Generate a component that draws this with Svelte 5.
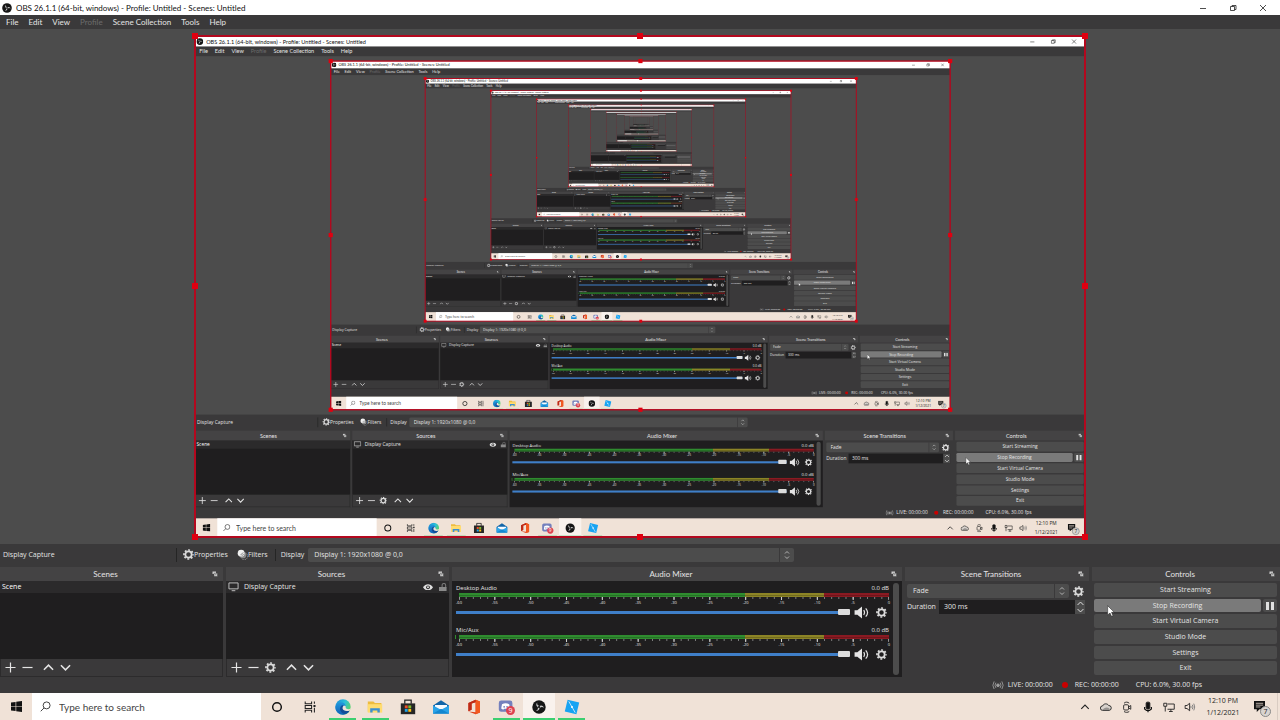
<script lang="ts">
  const maxDepth = 12;

  const menus = ['File', 'Edit', 'View', 'Profile', 'Scene Collection', 'Tools', 'Help'];
  const channels = ['Desktop Audio', 'Mic/Aux'];
  const marks = Array.from({ length: 13 }, (_, i) => (i === 12 ? '0' : String(-60 + i * 5)));
  const minorTicks = Array.from({ length: 61 }, (_, i) => `M${i * 10} 0v2`).join('');
  const majorTicks = Array.from({ length: 13 }, (_, i) => `M${i * 50} 0v3`).join('');
  const handles = ['nw', 'n', 'ne', 'w', 'e', 'sw', 's', 'se'];
  const apps = [
    { name: 'Cortana', running: false },
    { name: 'Task View', running: false },
    { name: 'Edge', running: true },
    { name: 'Explorer', running: true },
    { name: 'Store', running: false },
    { name: 'Mail', running: false },
    { name: 'Office', running: false },
    { name: 'Discord', running: true },
    { name: 'OBS', running: true },
    { name: 'Roblox Studio', running: true }
  ];
  const tray = ['Hidden icons', 'OneDrive', 'Meet Now', 'Microphone', 'Network', 'Volume'];

  let recording = $state(true);
</script>

{#snippet gear()}
  <svg class="gear" viewBox="0 0 16 16" fill="none" stroke="currentColor">
    <circle cx="8" cy="8" r="4.6" stroke-width="2.6" />
    <circle cx="8" cy="8" r="6.6" stroke-width="2.4" stroke-dasharray="2.7 2.484" stroke-dashoffset="1.35" />
  </svg>
{/snippet}

{#snippet popout()}
  <button class="popout" aria-label="Undock">
    <svg viewBox="0 0 12 12">
      <path d="M1 1h7v5H1z" fill="#d0d0d0" />
      <path d="M4 4.5h7V11H4z" fill="#d0d0d0" stroke="#434243" />
      <path d="M6 7.5h3" stroke="#434243" />
    </svg>
  </button>
{/snippet}

{#snippet chevron(dir: string)}
  <svg class="tool" viewBox="0 0 12 12" fill="none" stroke="currentColor" stroke-width="1.7">
    {#if dir === 'up'}
      <path d="M1 8.5l5-5 5 5" />
    {:else}
      <path d="M1 3.5l5 5 5-5" />
    {/if}
  </svg>
{/snippet}

{#snippet updown()}
  <svg class="updown" viewBox="0 0 6 10" fill="none" stroke="#b4b4b4">
    <path d="M1 3.5l2-2 2 2M1 6.5l2 2 2-2" />
  </svg>
{/snippet}

{#snippet obsLogo()}
  <svg viewBox="0 0 20 20">
    <circle cx="10" cy="10" r="9.6" fill="#161616" />
    <g fill="#c8c8c8">
      <path d="M9.3 10.2C6.2 9.4 5.2 6.2 7.4 3.4 7 6 8 7.4 10.4 8.3z" />
      <path d="M9.3 10.2C6.2 9.4 5.2 6.2 7.4 3.4 7 6 8 7.4 10.4 8.3z" transform="rotate(120 10 10)" />
      <path d="M9.3 10.2C6.2 9.4 5.2 6.2 7.4 3.4 7 6 8 7.4 10.4 8.3z" transform="rotate(240 10 10)" />
    </g>
    <circle cx="10" cy="10" r="1.5" fill="#161616" />
  </svg>
{/snippet}

{#snippet appIcon(name: string)}
  {#if name === 'OBS'}
    {@render obsLogo()}
  {:else}
    <svg viewBox="0 0 20 20">
      {#if name === 'Cortana'}
        <circle cx="10" cy="10" r="5.4" fill="none" stroke="#111" stroke-width="1.8" />
      {:else if name === 'Task View'}
        <path d="M4 3v3h8V3M4 17v-3h8v3M4 8v4h8V8zM15.500 3v3M15.500 11v6" fill="none" stroke="#222" stroke-width="1.300" />
        <path d="M14.300 7.500h2.600v2.400h-2.600z" fill="#222" />
      {:else if name === 'Edge'}
        <circle cx="10" cy="10" r="9.600" fill="url(#edge-top)" />
        <path d="M.6 11.500C.2 6.500 4 4 7.600 4c3.200 0 5.600 1.800 5.600 4.600 0 1.700-1.700 2-1.700 3.600 0 2 2.600 3.300 6.800 2.300C16.500 18 13.500 19.700 10 19.600 5 19.400 1 16 .6 11.500z" fill="url(#edge-blue)" />
        <path d="M8 8.400c-3.400 3-1.600 9 4.200 10.400 3-.6 4.900-2 6.100-4.300-4.200 1.300-8.600.4-8.600-3.100 0-1.400.9-1.900 1-3-.6-.8-1.800-.7-2.700 0z" fill="#124d98" />
        <path d="M10.700 8.400c-1.600 1.600-1.900 4.400.5 5.800 2.300 1.200 4.900 1.100 7.300.2l1.700-2.600c-2.600 1.500-6.500 1-6.900-1.200.4-1 .2-2.600-2.600-2.200z" fill="#f0e2d7" />
      {:else if name === 'Explorer'}
        <path d="M1 3h7l2 2h8v11H1z" fill="#eebc3e" />
        <path d="M1 6.500h18V17H1z" fill="#ffdc70" />
        <path d="M4 17v-5.500h12V17h-3v-2.500H7V17z" fill="#3d8fd1" />
      {:else if name === 'Store'}
        <path d="M6 6V1.500h8V6" fill="none" stroke="#222" stroke-width="1.500" />
        <path d="M1 5.500h18V19H1z" fill="#262626" />
        <path d="M6 8h3.600v3.600H6z" fill="#ef5029" />
        <path d="M10.400 8H14v3.600h-3.600z" fill="#7fba2c" />
        <path d="M6 12.400h3.600V16H6z" fill="#20a4e8" />
        <path d="M10.400 12.400H14V16h-3.600z" fill="#ffc017" />
      {:else if name === 'Mail'}
        <path d="M0 8l10-6.500L20 8v10H0z" fill="#1265a8" />
        <path d="M2.500 7.500h15V13h-15z" fill="#f7fbff" />
        <path d="M0 8l10 5.500L20 8v10H0z" fill="#2aa3e8" />
        <path d="M0 18l10-5.500L20 18z" fill="#1487d0" />
      {:else if name === 'Office'}
        <path d="M12 1l5.500 2v14L12 19l-9-3.500 9 1V4L7 5.500v8L3 15.300V5z" fill="#e0421d" />
        <path d="M12 1l5.500 2v14L12 19z" fill="#f2581f" />
        <path d="M12 1L3 5v10.300l4-1.800v-8L12 4z" fill="#bc2a18" />
      {:else if name === 'Discord'}
        <path d="M4 2h11a3 3 0 0 1 3 3v14l-4-3H4a3 3 0 0 1-3-3V5a3 3 0 0 1 3-3z" fill="#7480bd" />
        <path d="M5 6.500c3-1.500 6-1.500 9 0l1 5.500-2.500 1.500-1-1.300H7.500l-1 1.300L4 12z" fill="#fff" />
        <circle cx="7.700" cy="9.700" r="1.100" fill="#7480bd" />
        <circle cx="11.300" cy="9.700" r="1.100" fill="#7480bd" />
      {:else if name === 'Roblox Studio'}
        <path d="M4.500 1l14.500 3.500L15.500 19 1 15.500z" fill="#17a3f2" />
        <path d="M6 3l8 14" stroke="#fff" stroke-width=".9" />
        <circle cx="10" cy="10" r="1.300" fill="#fff" />
      {/if}
    </svg>
  {/if}
  {#if name === 'Discord'}
    <span class="badge">9</span>
  {/if}
{/snippet}

{#snippet trayIcon(name: string)}
  <svg viewBox="0 0 16 16" fill="none" stroke="#222" stroke-width="1.200">
    {#if name === 'Hidden icons'}
      <path d="M3 10.500l5-5 5 5" stroke-width="1.500" />
    {:else if name === 'OneDrive'}
      <path d="M3.500 12.500a3 3 0 0 1 0-6C5 3 10 3 11.500 6a3.300 3.300 0 0 1 1 6.500z" fill="#d8d2cd" />
      <path d="M3 12c3-4 7-4.500 10-1.500v1.500z" fill="#96928f" stroke="none" />
    {:else if name === 'Meet Now'}
      <rect x="3.500" y="5" width="6.500" height="7" rx="1.500" />
      <path d="M10 8l3-2v5l-3-2M4 3c2-2 5-2 7 0M4 14c2 1.500 5 1.500 7 0" />
    {:else if name === 'Microphone'}
      <rect x="5.500" y="1.500" width="5" height="9" rx="1.500" fill="#111" />
      <path d="M3.500 8v2.500L6 12.500h4l2.500-2V8M8 12v3" stroke="#111" stroke-width="1.600" />
    {:else if name === 'Network'}
      <path d="M6 4h9v7H6M8 14h5M10.500 11v3M1 3h4v4H1zM3 7v7" />
    {:else}
      <path d="M1.500 6h2.500l3.500-3v10L4 10H1.500z" />
      <path d="M9 6.500l.5 1.500-.5 1.500M11 5l1 3-1 3M13 3.500l1.300 4.500L13 12.500" stroke="#777" />
    {/if}
  </svg>
{/snippet}

{#snippet screen(depth: number)}
  <div class="screen">
    <header class="titlebar">
      <span class="logo">{@render obsLogo()}</span>
      <h1>OBS 26.1.1 (64-bit, windows) - Profile: Untitled - Scenes: Untitled</h1>
      <button aria-label="Minimize"><svg viewBox="0 0 8 8"><path d="M1 4.500h6" /></svg></button>
      <button aria-label="Restore"><svg viewBox="0 0 8 8"><path d="M1.500 2.500h4v4h-4zM3 2.500v-1h4v4H5.500" /></svg></button>
      <button aria-label="Close"><svg viewBox="0 0 8 8"><path d="M1 1l6 6M7 1L1 7" /></svg></button>
    </header>

    <nav class="menubar">
      {#each menus as menu}
        <button disabled={menu === 'Profile'}>{menu}</button>
      {/each}
    </nav>

    <main class="preview">
      <div class="source">
        <div class="capture" inert aria-hidden="true">
          {#if depth < maxDepth}
            <div class="scaled">{@render screen(depth + 1)}</div>
          {/if}
        </div>
        <div class="outline"></div>
        {#each handles as handle}
          <i class="handle {handle}"></i>
        {/each}
      </div>
    </main>

    <section class="context">
      <span class="current">Display Capture</span>
      <button>{@render gear()}Properties</button>
      <button class="filters">
        <svg viewBox="0 0 16 16">
          <circle cx="10.500" cy="10.500" r="5" fill="none" stroke="#b8b8b8" stroke-dasharray="1.500 1" />
          <circle cx="9" cy="9" r="4.500" fill="#8a8a8a" />
          <circle cx="6" cy="6" r="5" fill="#f0f0f0" />
          <path d="M5 9l4-4M7 10l3-3" stroke="#555" />
        </svg>Filters
      </button>
      <label for="display-{depth}">Display</label>
      <div class="combo wide">
        <select id="display-{depth}">
          <option>Display 1: 1920x1080 @ 0,0</option>
        </select>
        {@render updown()}
      </div>
    </section>

    <div class="docks">
      <section class="dock">
        <h2>Scenes{@render popout()}</h2>
        <ul class="list">
          <li class="scene">Scene</li>
        </ul>
        <div class="toolbar">
          <button aria-label="Add scene"><svg class="tool" viewBox="0 0 12 12"><path d="M6 .5v11M.5 6h11" stroke="currentColor" stroke-width="1.300" /></svg></button>
          <button aria-label="Remove scene"><svg class="tool" viewBox="0 0 12 12"><path d="M.5 6h11" stroke="currentColor" stroke-width="1.300" /></svg></button>
          <button class="apart" aria-label="Move scene up">{@render chevron('up')}</button>
          <button aria-label="Move scene down">{@render chevron('down')}</button>
        </div>
      </section>

      <section class="dock">
        <h2>Sources{@render popout()}</h2>
        <ul class="list">
          <li>
            <svg class="monitor" viewBox="0 0 12 10" fill="none" stroke="#c8c8c8"><path d="M1 1h10v6.500H1zM4 9.500h4" /></svg>
            <span>Display Capture</span>
            <svg class="eye" viewBox="0 0 12 8"><path d="M0 4c3-5 9-5 12 0-3 5-9 5-12 0z" fill="#dedede" /><circle cx="6" cy="4" r="2.300" fill="#2b2a2b" /><circle cx="6" cy="4" r="1.200" fill="#dedede" /></svg>
            <svg class="lock" viewBox="0 0 9 10"><path d="M3.500 5V2.500a2 2 0 0 1 4 0V5" fill="none" stroke="#777" stroke-width="1.200" /><path d="M0 4.500h8.500V10H0z" fill="#8a8a8a" /></svg>
          </li>
        </ul>
        <div class="toolbar">
          <button aria-label="Add source"><svg class="tool" viewBox="0 0 12 12"><path d="M6 .5v11M.5 6h11" stroke="currentColor" stroke-width="1.300" /></svg></button>
          <button aria-label="Remove source"><svg class="tool" viewBox="0 0 12 12"><path d="M.5 6h11" stroke="currentColor" stroke-width="1.300" /></svg></button>
          <button aria-label="Source properties">{@render gear()}</button>
          <button class="apart" aria-label="Move source up">{@render chevron('up')}</button>
          <button aria-label="Move source down">{@render chevron('down')}</button>
        </div>
      </section>

      <section class="dock">
        <h2>Audio Mixer{@render popout()}</h2>
        <div class="mixer">
          <div class="channels">
            {#each channels as channel, i}
              <div class="channel">
                <div class="channel-head">
                  <label for="volume-{depth}-{i}">{channel}</label>
                  <span>0.0 dB</span>
                </div>
                <div class="meter" class:live={i === 1}></div>
                <svg class="ticks" viewBox="0 0 600 3" preserveAspectRatio="none">
                  <path d={minorTicks} stroke="#8c8c8c" stroke-width="1" />
                  <path d={majorTicks} stroke="#d0d0d0" stroke-width="1.500" />
                </svg>
                <div class="marks">
                  {#each marks as mark}<span>{mark}</span>{/each}
                </div>
                <div class="fader">
                  <input id="volume-{depth}-{i}" type="range" min="0" max="100" value="100" />
                  <button aria-label="Mute">
                    <svg class="speaker" viewBox="0 0 16 14">
                      <path d="M0 4.500h3L8 .5v13l-5-4H0z" fill="currentColor" />
                      <path d="M9.800 4.500q1.800 2.500 0 5M12 2.500q4 4.500 0 9" fill="none" stroke="currentColor" stroke-width="1.300" />
                    </svg>
                  </button>
                  <button aria-label="Channel settings">{@render gear()}</button>
                </div>
              </div>
            {/each}
          </div>
          <div class="scrollbar"></div>
        </div>
      </section>

      <section class="dock">
        <h2>Scene Transitions{@render popout()}</h2>
        <div class="transitions">
          <div class="field">
            <div class="combo">
              <select aria-label="Transition">
                <option>Fade</option>
              </select>
              {@render updown()}
            </div>
            <button aria-label="Transition properties">{@render gear()}</button>
          </div>
          <div class="field">
            <label for="duration-{depth}">Duration</label>
            <div class="spin">
              <input id="duration-{depth}" type="text" value="300 ms" />
              <div class="steps">
                <button aria-label="Increase">{@render chevron('up')}</button>
                <button aria-label="Decrease">{@render chevron('down')}</button>
              </div>
            </div>
          </div>
        </div>
      </section>

      <section class="dock">
        <h2>Controls{@render popout()}</h2>
        <div class="controls">
          <button>Start Streaming</button>
          <div class="record">
            <button class="hot" onclick={() => (recording = !recording)}>
              {recording ? 'Stop Recording' : 'Start Recording'}
            </button>
            <button class="pause" aria-label="Pause recording">
              <svg viewBox="0 0 8 8" fill="#e0e0e0"><path d="M0 0h3v8H0zM5 0h3v8H5z" /></svg>
            </button>
            <svg class="cursor" viewBox="0 0 12 18"><path d="M1 1v14l3.500-3 2.200 5 2.300-1-2.200-5H11z" fill="#fff" stroke="#222" stroke-width=".8" /></svg>
          </div>
          <button>Start Virtual Camera</button>
          <button>Studio Mode</button>
          <button>Settings</button>
          <button>Exit</button>
        </div>
      </section>
    </div>

    <footer class="status">
      <svg class="signal" viewBox="0 0 14 10" fill="none" stroke="#a0a0a0">
        <circle cx="7" cy="5" r="1.600" fill="#a0a0a0" />
        <path d="M4.500 2q-2 3 0 6M9.500 2q2 3 0 6M2.500.5q-3 4.500 0 9M11.500.5q3 4.500 0 9" />
      </svg>
      <span>LIVE: 00:00:00</span>
      <i class="dot"></i>
      <span>REC: 00:00:00</span>
      <span class="cpu">CPU: 6.0%, 30.00 fps</span>
    </footer>

    <div class="taskbar">
      <button class="start" aria-label="Start">
        <svg viewBox="0 0 12 12" fill="#111"><path d="M0 1.700l5-.7v4.600H0zM5.700.9L12 0v5.600H5.700zM0 6.300h5V11l-5-.7zM5.700 6.300H12V12l-6.300-.9z" /></svg>
      </button>
      <label class="search">
        <svg viewBox="0 0 12 12" fill="none" stroke="#333"><circle cx="7.200" cy="4.800" r="3.800" /><path d="M4.400 7.600L.8 11.200" /></svg>
        <input type="text" placeholder="Type here to search" />
      </label>
      <div class="apps">
        {#each apps as app}
          <button class:running={app.running} class:focused={app.name === 'OBS'} aria-label={app.name}>
            {@render appIcon(app.name)}
          </button>
        {/each}
      </div>
      <div class="tray">
        {#each tray as item}
          <button aria-label={item}>{@render trayIcon(item)}</button>
        {/each}
      </div>
      <div class="clock">
        <span>12:10 PM</span>
        <span>1/12/2021</span>
      </div>
      <button class="notes" aria-label="Notifications">
        <svg viewBox="0 0 12 12"><path d="M0 0h12v9H6l-3 3V9H0z" fill="#111" /><path d="M2 2.500h8M2 4.500h8M2 6.500h5" stroke="#f0e2d7" stroke-width=".8" /></svg>
        <span class="count">7</span>
      </button>
    </div>
  </div>
{/snippet}

<svg class="defs" width="0" height="0" aria-hidden="true">
  <linearGradient id="edge-top" x1="0" x2="1" y1=".2" y2=".7">
    <stop offset="0" stop-color="#1b8fd8" />
    <stop offset=".5" stop-color="#2cc0d8" />
    <stop offset="1" stop-color="#62d65a" />
  </linearGradient>
  <linearGradient id="edge-blue" x1="0" x2="0" y1="0" y2="1">
    <stop offset="0" stop-color="#2199dc" />
    <stop offset="1" stop-color="#1260b8" />
  </linearGradient>
</svg>

{@render screen(0)}

<style>
  :global(body) {
    overflow: hidden;
    background: #3a393a;
  }

  .defs {
    position: absolute;
  }

  .screen {
    display: flex;
    flex-direction: column;
    min-height: 100vh;
    background: #3a393a;
    color: #e4e4e4;
    font-family: 'Open Sans', 'Noto Sans', sans-serif;
    font-size: 7px;
    line-height: 12px;
    white-space: nowrap;
  }

  button,
  input,
  select {
    margin: 0;
    padding: 0;
    border: 0;
    background: none;
    color: inherit;
    font: inherit;
    outline: none;
  }

  button {
    display: flex;
    align-items: center;
    justify-content: center;
  }

  svg {
    display: block;
    flex: none;
  }

  h1,
  h2,
  ul {
    margin: 0;
    padding: 0;
    font-size: inherit;
    font-weight: normal;
    list-style: none;
  }

  .titlebar,
  .menubar,
  .docks h2 {
    font-family: Lato, 'Open Sans', sans-serif;
    font-size: 8px;
  }

  .titlebar {
    display: flex;
    align-items: center;
    height: 15px;
    padding-right: 2px;
    background: #fff;
    color: #111;
  }

  .logo {
    width: 10px;
    margin: 0 4px 0 2px;
  }

  .titlebar h1 {
    flex: 1;
  }

  .titlebar button {
    width: 30px;
  }

  .titlebar button svg {
    width: 8px;
    fill: none;
    stroke: #222;
    stroke-width: 0.8;
  }

  .menubar {
    display: flex;
    gap: 10px;
    height: 14px;
    padding-left: 6px;
  }

  .menubar button:disabled {
    color: #6c6c6c;
  }

  .preview {
    display: flex;
    flex: 1;
    align-items: center;
    justify-content: center;
    background: #4c4c4c;
  }

  /* the captured display is shown at 69.6% of the real one */
  .source {
    position: relative;
    width: 69.6vw;
    height: 69.6vh;
  }

  .capture {
    height: 100%;
    overflow: hidden;
    background: #4c4c4c;
  }

  .scaled {
    width: 100vw;
    transform: scale(0.696);
    transform-origin: 0 0;
  }

  .outline {
    position: absolute;
    inset: -1px;
    border: 2px solid #b3081e;
  }

  .handle {
    position: absolute;
    width: 6px;
    height: 6px;
    background: #e00010;
    transform: translate(-50%, -50%);
  }

  .nw, .n, .ne { top: 0; }
  .w, .e { top: 50%; }
  .sw, .s, .se { top: 100%; }
  .nw, .w, .sw { left: 0; }
  .n, .s { left: 50%; }
  .ne, .e, .se { left: 100%; }

  .context {
    display: flex;
    align-items: center;
    height: 21px;
    margin-bottom: 2px;
    padding-left: 3px;
  }

  .current {
    width: 173px;
    border-right: 1px solid #252525;
    line-height: 14px;
  }

  .context button {
    margin-left: 6px;
  }

  .context .filters {
    margin-left: 9px;
    padding-right: 7px;
    border-right: 1px solid #252525;
  }

  .filters svg {
    width: 11px;
  }

  .context label {
    margin: 0 4px 0 5px;
  }

  .gear {
    width: 11px;
    height: 11px;
    color: #dcdcdc;
  }

  .combo {
    position: relative;
    display: flex;
    flex: 1;
    height: 14px;
    border-radius: 2px;
    background: #4c4c4c;
  }

  .combo.wide {
    flex: none;
    width: 38%;
  }

  select {
    flex: 1;
    padding: 0 6px;
    appearance: none;
  }

  .updown {
    width: 6px;
    height: 10px;
    padding: 2px 4px;
    border-left: 1px solid #3a393a;
  }

  .docks {
    display: grid;
    grid-template-columns: 223fr 223fr 450fr 184fr 188fr;
    gap: 3px;
    height: 110px;
  }

  .dock {
    display: flex;
    flex-direction: column;
    min-width: 0;
  }

  h2 {
    position: relative;
    height: 14px;
    background: #444344;
    line-height: 14px;
    text-align: center;
    padding-right: 12px;
  }

  .popout {
    position: absolute;
    top: 4px;
    right: 5px;
  }

  .popout svg {
    width: 6px;
    height: 6px;
  }

  .list {
    flex: 1;
    background: #1f1e1f;
  }

  .list li {
    display: flex;
    align-items: center;
    height: 12px;
    padding: 0 2px;
    background: #2b2a2b;
  }

  .list .scene {
    color: #fff;
  }

  .list span {
    flex: 1;
    margin-left: 5px;
  }

  .monitor {
    width: 11px;
  }

  .eye {
    width: 10px;
    margin-right: 6px;
  }

  .lock {
    width: 8px;
  }

  .toolbar {
    display: flex;
    align-items: center;
    gap: 6px;
    height: 18px;
    padding-left: 4px;
    border: 1px solid #2c2b2c;
    border-top: 0;
    box-sizing: border-box;
  }

  .toolbar .apart {
    margin-left: 4px;
  }

  .tool {
    width: 11px;
    height: 11px;
  }

  .mixer {
    display: flex;
    flex: 1;
    padding: 2px 3px 2px 4px;
    background: #1f1e1f;
  }

  .channels {
    flex: 1;
    margin-right: 4px;
  }

  .channel {
    height: 42px;
  }

  .channel-head {
    display: flex;
    justify-content: space-between;
    height: 10px;
    font-size: 6px;
    line-height: 10px;
  }

  .meter {
    height: 4px;
    margin-left: 3px;
    background:
      linear-gradient(transparent 50%, #0003 50%, #0003 75%, transparent 75%),
      linear-gradient(90deg, #2f8c2f 66.5%, #8c8426 66.5%, #8c8426 85%, #8a1a22 85%);
  }

  .meter.live {
    box-shadow: -3px 0 #1f1e1f, -4px 0 #2f8c2f;
  }

  .ticks {
    width: calc(100% - 3px);
    height: 3px;
    margin-left: 3px;
  }

  .marks {
    display: flex;
    justify-content: space-between;
    height: 5px;
    margin: 0 -4px 0 -1px;
    font-size: 4px;
    line-height: 5px;
  }

  .marks span {
    width: 8px;
    text-align: center;
  }

  .fader {
    display: flex;
    align-items: center;
    height: 14px;
  }

  .fader input {
    flex: 1;
    height: 6px;
    appearance: none;
    background: linear-gradient(#3f7fc8, #3f7fc8) center / 100% 3px no-repeat;
  }

  .fader input::-webkit-slider-thumb {
    width: 12px;
    height: 6px;
    appearance: none;
    border-radius: 1px;
    background: #dcdcdc;
  }

  .speaker {
    width: 16px;
    height: 13px;
    margin: 0 6px 0 4px;
  }

  .fader .gear {
    margin-right: 2px;
  }

  .scrollbar {
    width: 6px;
    border-radius: 3px;
    background: #4c4c4c;
  }

  .transitions {
    display: flex;
    flex-direction: column;
    gap: 2px;
    padding: 3px 4px 0 2px;
  }

  .field {
    display: flex;
    align-items: center;
    gap: 3px;
  }

  .field > button {
    padding: 0 1px;
  }

  .spin {
    display: flex;
    flex: 1;
    height: 14px;
    background: #1f1e1f;
  }

  .spin input {
    flex: 1;
    min-width: 0;
    padding-left: 5px;
  }

  .steps {
    display: flex;
    flex-direction: column;
    width: 10px;
    background: #4c4c4c;
  }

  .steps button {
    flex: 1;
  }

  .steps .tool {
    width: 7px;
    height: 7px;
  }

  .controls {
    display: flex;
    flex: 1;
    flex-direction: column;
    gap: 2px;
    padding: 2px 3px 2px 2px;
  }

  .controls button {
    flex: 1;
    border-radius: 2px;
    background: #4c4c4c;
  }

  .record {
    position: relative;
    display: flex;
    flex: 1;
    gap: 2px;
  }

  .record .hot {
    background: #7a7a7a;
  }

  .record .pause {
    flex: none;
    width: 14px;
  }

  .pause svg {
    width: 8px;
  }

  .cursor {
    position: absolute;
    top: 6px;
    left: 13px;
    width: 8px;
    height: 12px;
  }

  .status {
    display: flex;
    align-items: center;
    justify-content: flex-end;
    height: 16px;
    margin-right: 78px;
  }

  .signal {
    width: 12px;
    margin-right: 4px;
  }

  .dot {
    width: 6px;
    height: 6px;
    margin: 0 7px 0 9px;
    border-radius: 3px;
    background: #c80000;
  }

  .cpu {
    margin-left: 17px;
  }

  .taskbar {
    display: flex;
    height: 27px;
    background: #f0e2d7;
    color: #222;
  }

  .start {
    width: 32px;
  }

  .start svg {
    width: 11px;
  }

  .search {
    display: flex;
    align-items: center;
    gap: 8px;
    width: 229px;
    padding-left: 8px;
    background: #fff;
    box-sizing: border-box;
    font-family: Lato, 'Open Sans', sans-serif;
    font-size: 10px;
  }

  .search svg {
    width: 11px;
  }

  .search input {
    flex: 1;
  }

  .search input::placeholder {
    color: #444;
    opacity: 1;
  }

  .apps {
    display: grid;
    grid-template-columns: repeat(10, 1fr);
    width: 327px;
    margin-right: auto;
  }

  .apps button {
    position: relative;
  }

  .apps svg {
    width: 16px;
    height: 16px;
  }

  .apps .running::after {
    position: absolute;
    right: 3px;
    bottom: 0;
    left: 3px;
    height: 2px;
    background: #3ccf70;
    content: '';
  }

  .apps .focused {
    background: #f9f2ed;
  }

  .apps .focused::after {
    right: 0;
    left: 0;
  }

  .apps .focused svg {
    width: 14px;
  }

  .badge {
    position: absolute;
    top: 13px;
    left: 16px;
    width: 9px;
    height: 9px;
    border-radius: 50%;
    background: #dc4250;
    color: #fff;
    line-height: 9px;
  }

  .tray {
    display: flex;
  }

  .tray button {
    width: 21px;
  }

  .tray svg {
    width: 12px;
    height: 12px;
  }

  .clock {
    display: flex;
    flex-direction: column;
    align-items: center;
    justify-content: center;
    width: 46px;
  }

  .notes {
    position: relative;
    width: 32px;
    padding-right: 4px;
    border-right: 1px solid #d9ccc2;
    margin-right: 2px;
  }

  .notes svg {
    width: 11px;
  }

  .count {
    position: absolute;
    top: 13px;
    left: 14px;
    width: 9px;
    height: 9px;
    border: 1px solid #888;
    border-radius: 50%;
    background: #d8d4d0;
    line-height: 9px;
  }
</style>
